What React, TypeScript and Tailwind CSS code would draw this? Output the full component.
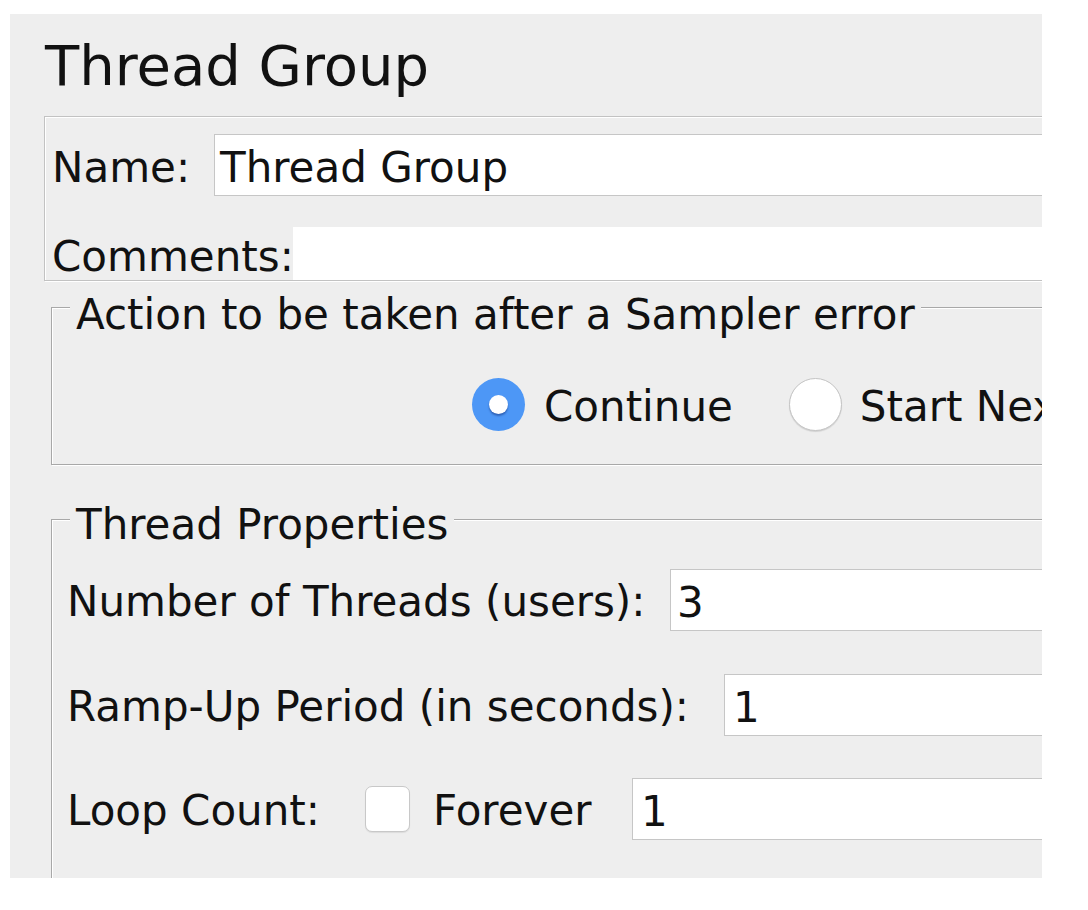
export default function App() {
  return (
    <div className="h-[910px] bg-white pt-[14px] pl-[10px] font-['DejaVu_Sans',Verdana,sans-serif] text-[#111]">
      <div className="w-[1032px] h-[864px] bg-[#eeeeee] overflow-hidden">
        <h1 className="ml-[35px] pt-[24px] text-[56px] leading-none font-normal">Thread Group</h1>

        {/* name + comments */}
        <div className="ml-[34px] mt-[22px] w-[1100px] border border-[#c2c2c2] shadow-[inset_1px_1px_0_#fff,1px_1px_0_#fff] pl-[7px] pt-[17px] text-[42px] leading-none">
          <div className="flex h-[62px]">
            <div className="w-[162px] shrink-0 pt-[13px]">Name:</div>
            <div className="flex-1 bg-white border border-[#c6c6c6] pl-[5px] pt-[12px]">Thread Group</div>
          </div>
          <div className="flex h-[53px] mt-[31px]">
            <div className="w-[241px] shrink-0 pt-[9px]">Comments:</div>
            <div className="flex-1 bg-white" />
          </div>
        </div>

        {/* sampler error */}
        <fieldset className="ml-[41px] mt-[9px] w-[1100px] border border-[#a8a8a8] shadow-[inset_1px_1px_0_#fff,1px_1px_0_#fff] text-[42px] leading-none">
          <legend className="ml-[18px] px-[6px] pt-[15px] leading-[20px] bg-[#eeeeee]">
            Action to be taken after a Sampler error
          </legend>
          <div className="flex items-center pl-[420px] mt-[53px] pb-[33px]">
            <span className="w-[53px] h-[53px] shrink-0 rounded-full bg-[#4d97f6] flex items-center justify-center">
              <span className="w-[19px] h-[19px] rounded-full bg-white shadow-[0_2px_2px_rgba(0,20,90,0.4)]" />
            </span>
            <span className="ml-[19px] pt-[5px]">Continue</span>
            <span className="ml-[56px] w-[53px] h-[53px] shrink-0 rounded-full bg-white border border-[#c4c4c4] shadow-[0_1px_1px_rgba(0,0,0,0.12)]" />
            <span className="ml-[18px] pt-[5px] whitespace-nowrap">Start Next Thread Loop</span>
          </div>
        </fieldset>

        {/* thread properties */}
        <fieldset className="ml-[41px] mt-[38px] w-[1100px] h-[500px] border border-[#a8a8a8] shadow-[inset_1px_1px_0_#fff,1px_1px_0_#fff] text-[42px] leading-none">
          <legend className="ml-[18px] px-[6px] pt-[12px] leading-[20px] bg-[#eeeeee]">Thread Properties</legend>
          <div className="pl-[15px] mt-[34px]">
            <div className="flex h-[62px]">
              <div className="w-[603px] shrink-0 pt-[12px] whitespace-nowrap">Number of Threads (users):</div>
              <div className="flex-1 bg-white border border-[#c6c6c6] pl-[6px] pt-[12px]">3</div>
            </div>
            <div className="flex h-[62px] mt-[43px]">
              <div className="w-[657px] shrink-0 pt-[12px] whitespace-nowrap">Ramp-Up Period (in seconds):</div>
              <div className="flex-1 bg-white border border-[#c6c6c6] pl-[8px] pt-[12px]">1</div>
            </div>
            <div className="flex h-[62px] mt-[42px]">
              <div className="w-[298px] shrink-0 pt-[12px] whitespace-nowrap">Loop Count:</div>
              <span className="mt-[8px] w-[45px] h-[46px] shrink-0 rounded-[7px] bg-white border border-[#c8c8c8] shadow-[0_1px_1px_rgba(0,0,0,0.08)]" />
              <div className="w-[222px] shrink-0 pl-[23px] pt-[12px]">Forever</div>
              <div className="flex-1 bg-white border border-[#c6c6c6] pl-[8px] pt-[12px]">1</div>
            </div>
          </div>
        </fieldset>
      </div>
    </div>
  )
}
